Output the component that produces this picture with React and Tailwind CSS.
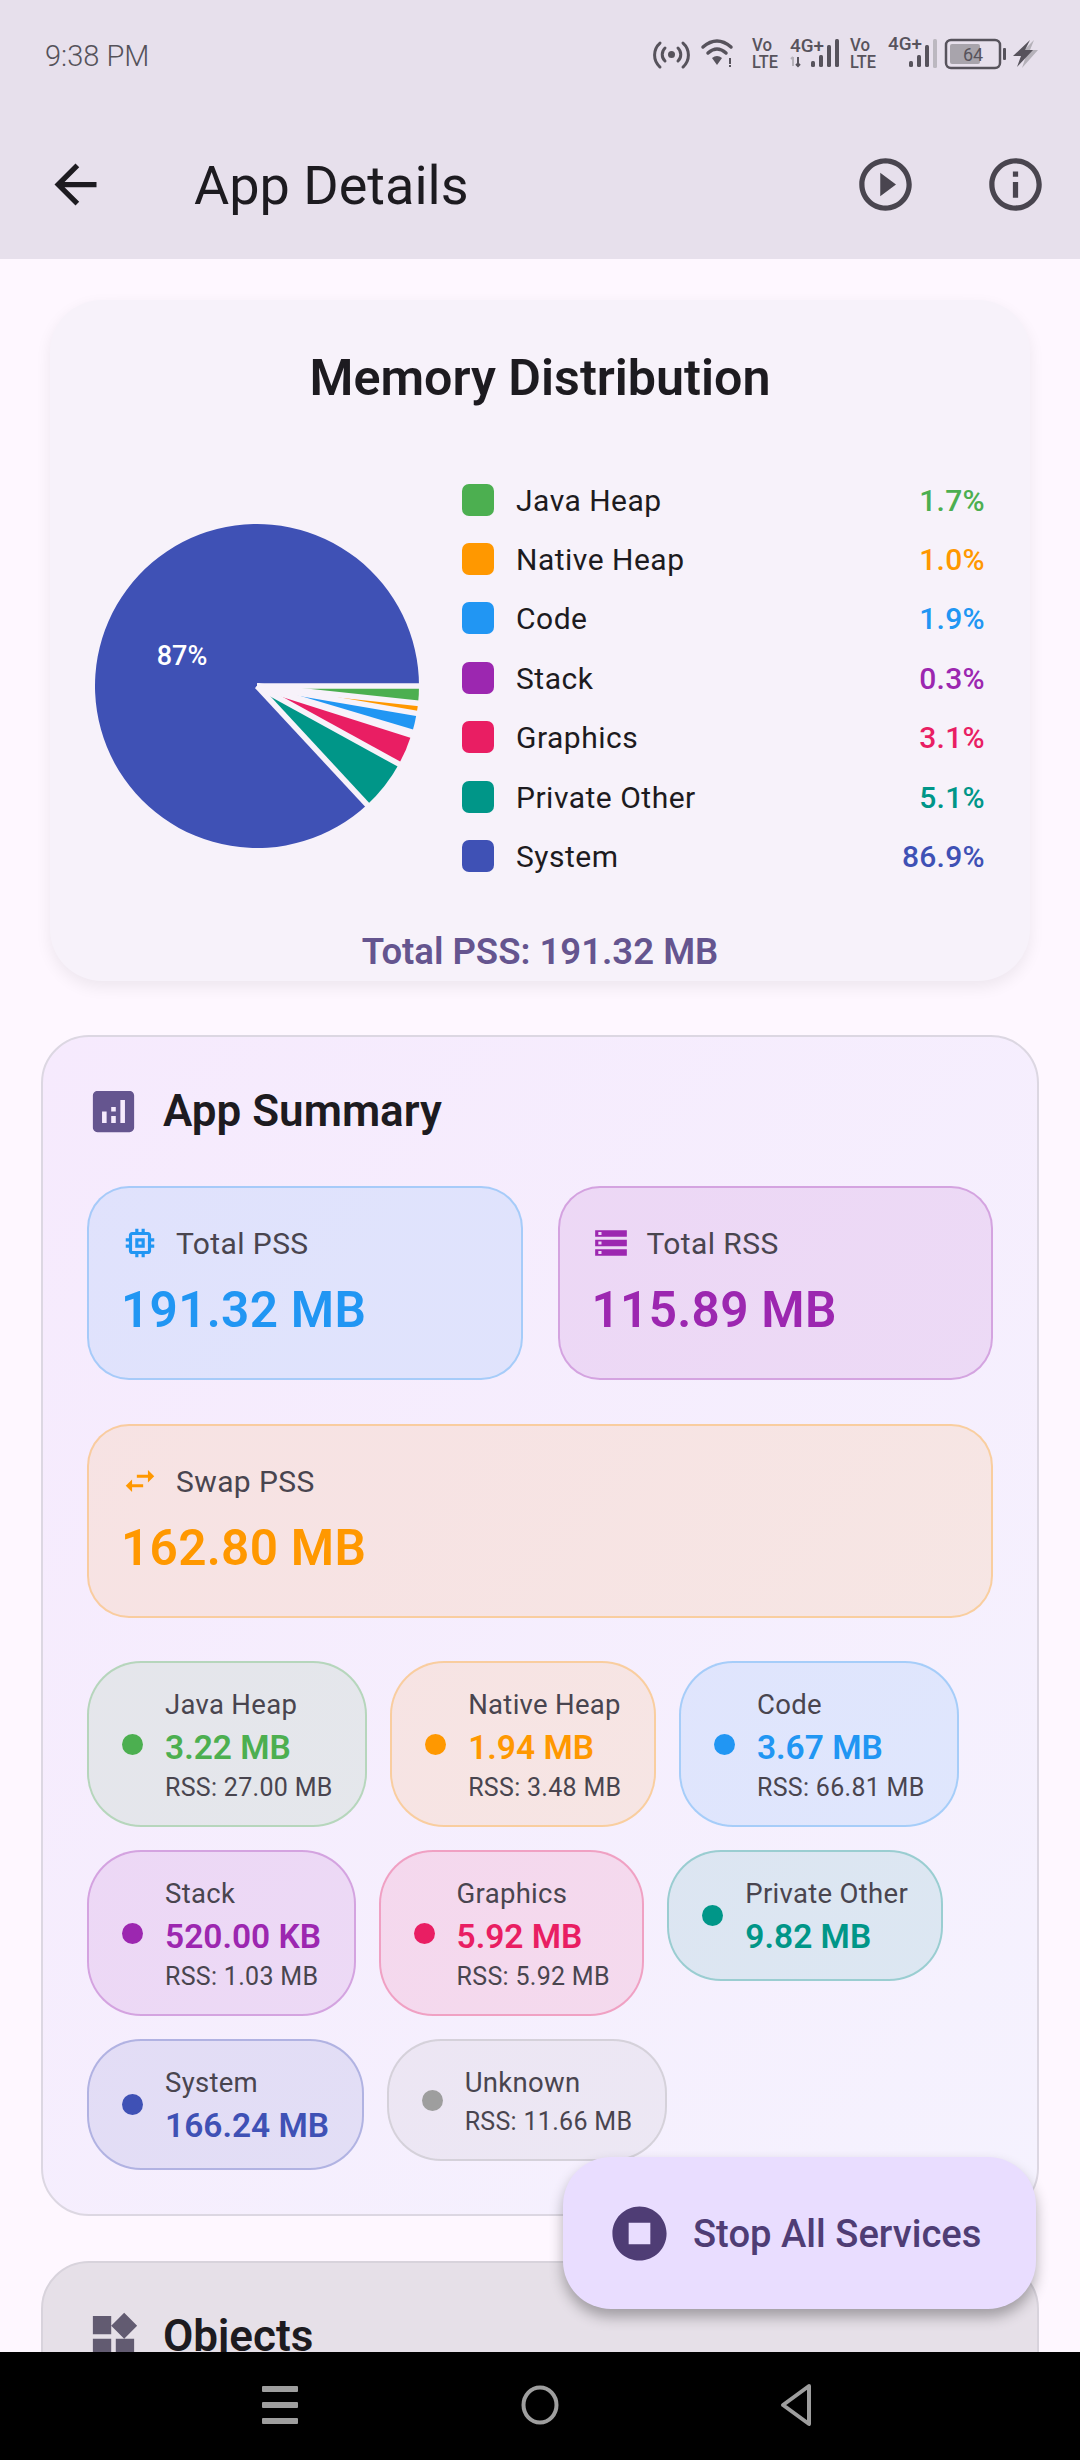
import React from "react";

const FONT = { fontFamily: "Roboto, sans-serif" };

const pieData = [
  { value: 1.7, color: "#4caf50" },
  { value: 1.0, color: "#ff9800" },
  { value: 1.9, color: "#2196f3" },
  { value: 0.3, color: "#9c27b0" },
  { value: 3.1, color: "#e91e63" },
  { value: 5.1, color: "#009688" },
  { value: 86.9, color: "#3f51b5" },
];

const legend = [
  { name: "Java Heap", pct: "1.7%", swatch: "bg-[#4caf50]", text: "text-[#4caf50]" },
  { name: "Native Heap", pct: "1.0%", swatch: "bg-[#ff9800]", text: "text-[#ff9800]" },
  { name: "Code", pct: "1.9%", swatch: "bg-[#2196f3]", text: "text-[#2196f3]" },
  { name: "Stack", pct: "0.3%", swatch: "bg-[#9c27b0]", text: "text-[#9c27b0]" },
  { name: "Graphics", pct: "3.1%", swatch: "bg-[#e91e63]", text: "text-[#e91e63]" },
  { name: "Private Other", pct: "5.1%", swatch: "bg-[#009688]", text: "text-[#009688]" },
  { name: "System", pct: "86.9%", swatch: "bg-[#3f51b5]", text: "text-[#3f51b5]" },
];

const chipRows = [
  [
    { name: "Java Heap", value: "3.22 MB", rss: "RSS: 27.00 MB", box: "bg-[#4caf50]/10 border-[#4caf50]/30", dot: "bg-[#4caf50]", text: "text-[#4caf50]" },
    { name: "Native Heap", value: "1.94 MB", rss: "RSS: 3.48 MB", box: "bg-[#ff9800]/10 border-[#ff9800]/30", dot: "bg-[#ff9800]", text: "text-[#ff9800]" },
    { name: "Code", value: "3.67 MB", rss: "RSS: 66.81 MB", box: "bg-[#2196f3]/10 border-[#2196f3]/30", dot: "bg-[#2196f3]", text: "text-[#2196f3]" },
  ],
  [
    { name: "Stack", value: "520.00 KB", rss: "RSS: 1.03 MB", box: "bg-[#9c27b0]/10 border-[#9c27b0]/30", dot: "bg-[#9c27b0]", text: "text-[#9c27b0]" },
    { name: "Graphics", value: "5.92 MB", rss: "RSS: 5.92 MB", box: "bg-[#e91e63]/10 border-[#e91e63]/30", dot: "bg-[#e91e63]", text: "text-[#e91e63]" },
    { name: "Private Other", value: "9.82 MB", box: "bg-[#009688]/10 border-[#009688]/30", dot: "bg-[#009688]", text: "text-[#009688]" },
  ],
  [
    { name: "System", value: "166.24 MB", box: "bg-[#3f51b5]/10 border-[#3f51b5]/30", dot: "bg-[#3f51b5]", text: "text-[#3f51b5]" },
    { name: "Unknown", rss: "RSS: 11.66 MB", box: "bg-[#9e9e9e]/10 border-[#9e9e9e]/30", dot: "bg-[#9e9e9e]", text: "text-[#9e9e9e]" },
  ],
];

const MaterialIcon = ({ d, size = 63, className = "" }) => (
  <svg width={size} height={size} viewBox="0 0 24 24" className={`shrink-0 fill-current ${className}`}>
    <path d={d} />
  </svg>
);

const icons = {
  back: "M20 11H7.83l5.59-5.59L12 4l-8 8 8 8 1.41-1.41L7.83 13H20v-2z",
  play: "M10 16.5l6-4.5-6-4.5v9zM12 2C6.48 2 2 6.48 2 12s4.48 10 10 10 10-4.48 10-10S17.52 2 12 2zm0 18c-4.41 0-8-3.59-8-8s3.59-8 8-8 8 3.59 8 8-3.59 8-8 8z",
  info: "M11 7h2v2h-2zm0 4h2v6h-2zm1-9C6.48 2 2 6.48 2 12s4.48 10 10 10 10-4.48 10-10S17.52 2 12 2zm0 18c-4.41 0-8-3.59-8-8s3.59-8 8-8 8 3.59 8 8-3.59 8-8 8z",
  memory: "M15 9H9v6h6V9zm-2 4h-2v-2h2v2zm8-2V9h-2V7c0-1.1-.9-2-2-2h-2V3h-2v2h-2V3H9v2H7c-1.1 0-2 .9-2 2v2H3v2h2v2H3v2h2v2c0 1.1.9 2 2 2h2v2h2v-2h2v2h2v-2h2c1.1 0 2-.9 2-2v-2h2v-2h-2v-2h2zm-4 6H7V7h10v10z",
  storage: "M2 20h20v-4H2v4zm2-3h2v2H4v-2zM2 4v4h20V4H2zm4 3H4V5h2v2zm-4 7h20v-4H2v4zm2-3h2v2H4v-2z",
  swap: "M6.99 11L3 15l3.99 4v-3H14v-2H6.99v-3zM21 9l-3.99-4v3H10v2h7.01v3L21 9z",
  analytics: "M19 3H5c-1.1 0-2 .9-2 2v14c0 1.1.9 2 2 2h14c1.1 0 2-.9 2-2V5c0-1.1-.9-2-2-2zM9 17H7v-5h2v5zm4 0h-2v-3h2v3zm0-5h-2v-2h2v2zm4 5h-2V7h2v10z",
  widgets: "M13 13v8h8v-8h-8zM3 21h8v-8H3v8zM3 3v8h8V3H3zm13.66-1.31L11 7.34 16.66 13l5.66-5.66-5.66-5.65z",
  stop: "M12 2C6.48 2 2 6.48 2 12s4.48 10 10 10 10-4.48 10-10S17.52 2 12 2zm4 14H8V8h8v8z",
};

// status bar icons, drawn in page coordinates
const StatusIcons = () => {
  const c = "#57535c";
  const textProps = { fontFamily: "Roboto, sans-serif", fill: c, fontWeight: "500", lengthAdjust: "spacingAndGlyphs" };
  return (
    <svg width="400" height="50" viewBox="645 30 400 50" className="shrink-0">
      <g fill="none" stroke={c} strokeWidth="3" strokeLinecap="round">
        <path d="M660 43 A16 16 0 0 0 660 67" />
        <path d="M665 48 A9 9 0 0 0 665 61" />
        <path d="M683 43 A16 16 0 0 1 683 67" />
        <path d="M678 48 A9 9 0 0 1 678 61" />
        <path d="M703 47 Q717 35 731 47" strokeWidth="3.5" />
        <path d="M708 53 Q717 45 726 53" strokeWidth="3.5" />
      </g>
      <circle cx="671.5" cy="54.5" r="3.5" fill={c} />
      <path d="M712 58 Q717 54 722 58 L717 65 Z" fill={c} />
      <rect x="729" y="58" width="2" height="6" fill={c} />
      <rect x="729" y="65" width="2" height="2" fill={c} />

      <text x="752" y="51" fontSize="18" textLength="20" {...textProps}>Vo</text>
      <text x="752" y="68" fontSize="18" textLength="26" {...textProps}>LTE</text>
      <text x="790" y="52" fontSize="18" textLength="34" {...textProps}>4G+</text>
      <path d="M793 57 v9 M791 59 l2 -2" stroke="#b5b1b9" strokeWidth="2" fill="none" />
      <path d="M798 57 v9 M796 64 l2 2 l2 -2" stroke={c} strokeWidth="2" fill="none" />
      <rect x="811" y="61" width="4" height="6" rx="1.5" fill={c} />
      <rect x="819" y="55" width="4" height="12" rx="1.5" fill={c} />
      <rect x="827" y="45" width="4" height="22" rx="1.5" fill={c} />
      <rect x="835" y="39" width="4" height="28" rx="1.5" fill={c} />

      <text x="850" y="51" fontSize="18" textLength="20" {...textProps}>Vo</text>
      <text x="850" y="68" fontSize="18" textLength="26" {...textProps}>LTE</text>
      <text x="888" y="50" fontSize="18" textLength="34" {...textProps}>4G+</text>
      <rect x="909" y="61" width="4" height="6" rx="1.5" fill={c} />
      <rect x="917" y="55" width="4" height="12" rx="1.5" fill={c} />
      <rect x="925" y="45" width="4" height="22" rx="1.5" fill={c} />
      <rect x="933" y="39" width="4" height="29" rx="1.5" fill="#bcb8c0" />

      <rect x="950" y="44" width="30" height="20" rx="2" fill="#a8a4ac" />
      <rect x="946" y="40" width="54" height="28" rx="5" fill="none" stroke={c} strokeWidth="2.5" />
      <text x="973" y="61" fontSize="18" textAnchor="middle" fontFamily="Roboto, sans-serif" fill={c}>64</text>
      <rect x="1003" y="48" width="3" height="12" rx="1" fill={c} />
      <path d="M1034 40 L1018 56 H1026 L1022 68 L1038 50 H1030 Z" fill="#b5b1b9" />
      <path d="M1030 40 L1013 56 H1021 L1017 67 L1033 50 H1025 Z" fill={c} />
    </svg>
  );
};

const polar = (deg, r) => {
  const a = (deg * Math.PI) / 180;
  return [162 + r * Math.cos(a), 162 + r * Math.sin(a)];
};

const PieChart = () => {
  let start = 0;
  const slices = pieData.map((s) => {
    const end = start + (s.value / 100) * 360;
    const [x1, y1] = polar(start, 162);
    const [x2, y2] = polar(end, 162);
    const large = end - start > 180 ? 1 : 0;
    const item = { ...s, start, d: `M162 162 L${x1} ${y1} A162 162 0 ${large} 1 ${x2} ${y2} Z` };
    start = end;
    return item;
  });
  return (
    <svg width="324" height="324" viewBox="0 0 324 324" className="shrink-0 mt-[54px]">
      {slices.map((s) => (
        <path key={s.color} d={s.d} fill={s.color} />
      ))}
      {slices.map((s) => {
        const [x, y] = polar(s.start, 170);
        return <line key={s.color} x1="162" y1="162" x2={x} y2={y} stroke="#f7f2fa" strokeWidth="5.6" />;
      })}
      <text x="87" y="141" fill="#fff" fontSize="27" fontWeight="500" textAnchor="middle" fontFamily="Roboto, sans-serif">87%</text>
    </svg>
  );
};

const StatBox = ({ icon, iconClass, label, value, valueClass, box, className = "" }) => (
  <div className={`h-[194px] rounded-[42px] border-2 pl-[32px] pt-[35px] ${box} ${className}`}>
    <div className="flex items-center gap-[17px] h-[40px]">
      <MaterialIcon d={icon} size={38} className={iconClass} />
      <span className="text-[30px] tracking-[0.4px] text-[#49454f]">{label}</span>
    </div>
    <div className={`mt-[17px] text-[49.5px] leading-[60px] font-semibold tracking-[0.3px] ${valueClass}`}>{value}</div>
  </div>
);

const Chip = ({ name, value, rss, box, dot, text }) => (
  <div className={`flex items-center gap-[22px] rounded-[54px] border-2 pl-[33px] pr-[32.5px] py-[20px] ${box}`}>
    <div className={`w-[21px] h-[21px] rounded-full shrink-0 ${dot}`} />
    <div className="flex flex-col">
      <span className="text-[27.5px] leading-[43px] tracking-[0.3px] text-[#49454f]">{name}</span>
      {value && <span className={`text-[33.5px] leading-[44px] font-semibold ${text}`}>{value}</span>}
      {rss && <span className="text-[25px] leading-[35px] tracking-[0.3px] text-[#49454f]">{rss}</span>}
    </div>
  </div>
);

export default function App() {
  return (
    <div className="relative w-[1080px] h-[2460px] overflow-hidden flex flex-col bg-[#fef7ff]" style={FONT}>
      {/* app bar + status bar */}
      <header className="h-[259px] shrink-0 bg-[#e7e0ec]">
        <div className="h-[110px] flex items-center justify-between pl-[45px] pr-[35px]">
          <span className="mt-[3px] text-[29px] font-light text-[#55525a]">9:38 PM</span>
          <StatusIcons />
        </div>
        <div className="h-[149px] flex items-center pl-[44px] pr-[33px]">
          <MaterialIcon d={icons.back} className="text-[#1d1b20]" />
          <h1 className="ml-[87px] mt-[2px] text-[54px] text-[#1d1b20]">App Details</h1>
          <MaterialIcon d={icons.play} className="ml-auto text-[#49454f]" />
          <MaterialIcon d={icons.info} className="ml-[67px] text-[#49454f]" />
        </div>
      </header>

      <main className="flex-1 min-h-0 overflow-hidden px-[41px] pt-[41px]">
        {/* pie card */}
        <section className="mx-[9px] h-[681px] rounded-[52px] bg-[#f7f2fa] shadow-[0_6px_16px_rgba(0,0,0,0.07)] pt-[46px] pl-[45px] pr-[45px]">
          <h2 className="text-center text-[50.2px] leading-[64px] font-semibold text-[#1d1b20]">Memory Distribution</h2>
          <div className="flex items-start mt-[60px]">
            <PieChart />
            <ul className="flex-1 ml-[43px]">
              {legend.map((l) => (
                <li key={l.name} className="h-[59.4px] flex items-center">
                  <span className={`w-[32px] h-[32px] rounded-[7px] ${l.swatch}`} />
                  <span className="ml-[22px] mt-[1px] text-[30px] tracking-[0.5px] text-[#1d1b20]">{l.name}</span>
                  <span className={`ml-auto mt-[1px] text-[30px] font-medium tracking-[0.3px] ${l.text}`}>{l.pct}</span>
                </li>
              ))}
            </ul>
          </div>
          <p className="mt-[41px] text-center text-[36.5px] leading-[50px] font-semibold text-[#65558f]">Total PSS: 191.32 MB</p>
        </section>

        {/* summary card */}
        <section className="mt-[54px] h-[1181px] rounded-[48px] border-2 border-[#dcd7e2] bg-gradient-to-br from-[#f6eafd] to-[#f5f2fe] pt-[44px] pl-[44px] pr-[44px]">
          <div className="flex items-center h-[60px] -ml-[1px]">
            <MaterialIcon d={icons.analytics} size={55} className="text-[#65558f]" />
            <h2 className="ml-[22px] text-[44px] font-semibold text-[#1d1b20]">App Summary</h2>
          </div>
          <div className="flex gap-[35px] mt-[45px]">
            <StatBox className="flex-1" box="bg-[#2196f3]/10 border-[#2196f3]/30" icon={icons.memory} iconClass="text-[#2196f3]" label="Total PSS" value="191.32 MB" valueClass="text-[#2196f3]" />
            <StatBox className="flex-1" box="bg-[#9c27b0]/10 border-[#9c27b0]/30" icon={icons.storage} iconClass="text-[#9c27b0]" label="Total RSS" value="115.89 MB" valueClass="text-[#9c27b0]" />
          </div>
          <StatBox className="mt-[44px]" box="bg-[#ff9800]/10 border-[#ff9800]/30" icon={icons.swap} iconClass="text-[#ff9800]" label="Swap PSS" value="162.80 MB" valueClass="text-[#ff9800]" />
          <div className="mt-[43px] flex flex-col gap-[23px]">
            {chipRows.map((row, i) => (
              <div key={i} className="flex items-start gap-[23px]">
                {row.map((c) => (
                  <Chip key={c.name} {...c} />
                ))}
              </div>
            ))}
          </div>
        </section>

        {/* objects card, cut off by the nav bar */}
        <section className="mt-[45px] h-[400px] rounded-[48px] border-2 border-[#d8d3dc] bg-[#e6e0e8] pt-[43px] pl-[44px]">
          <div className="flex items-center h-[60px] -ml-[1px]">
            <MaterialIcon d={icons.widgets} size={55} className="text-[#625b71]" />
            <h2 className="ml-[22px] text-[44px] font-semibold text-[#1d1b20]">Objects</h2>
          </div>
        </section>
      </main>

      {/* bottom nav */}
      <nav className="relative z-10 h-[108px] shrink-0 bg-black">
        <div className="flex h-full">
          <div className="w-[559px] h-full flex items-center justify-end -mt-[1px]">
            <svg width="297" height="40" viewBox="0 0 297 40" className="shrink-0">
              <rect x="0" y="1" width="36" height="6" rx="1" fill="#9e9e9e" />
              <rect x="0" y="17" width="36" height="6" rx="1" fill="#9e9e9e" />
              <rect x="0" y="33" width="36" height="6" rx="1" fill="#9e9e9e" />
              <ellipse cx="278" cy="20" rx="16.5" ry="17.5" fill="none" stroke="#9e9e9e" strokeWidth="4" />
            </svg>
          </div>
          <div className="flex-1 h-full flex items-center pl-[220px] -mt-[1px]">
            <svg width="34" height="44" viewBox="0 0 34 44" className="shrink-0">
              <path d="M30 3 L4 22 L30 41 Z" fill="none" stroke="#9e9e9e" strokeWidth="4" strokeLinejoin="round" />
            </svg>
          </div>
        </div>
      </nav>

      {/* floating button */}
      <button className="absolute left-[563px] top-[2157px] z-20 w-[473px] h-[152px] rounded-[48px] bg-[#e9ddff] shadow-[0_8px_14px_rgba(0,0,0,0.3)] flex items-center pl-[44px]">
        <MaterialIcon d={icons.stop} size={65} className="text-[#4f3d75]" />
        <span className="ml-[21px] mt-[4px] text-[38.2px] font-medium text-[#4f3d75]">Stop All Services</span>
      </button>
    </div>
  );
}
